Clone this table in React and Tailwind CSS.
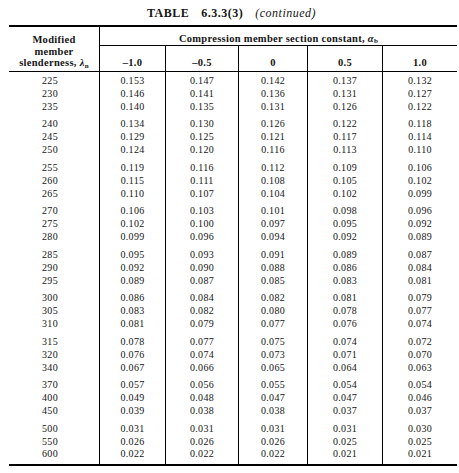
const rows = [
  [
    ["225", "0.153", "0.147", "0.142", "0.137", "0.132"],
    ["230", "0.146", "0.141", "0.136", "0.131", "0.127"],
    ["235", "0.140", "0.135", "0.131", "0.126", "0.122"],
  ],
  [
    ["240", "0.134", "0.130", "0.126", "0.122", "0.118"],
    ["245", "0.129", "0.125", "0.121", "0.117", "0.114"],
    ["250", "0.124", "0.120", "0.116", "0.113", "0.110"],
  ],
  [
    ["255", "0.119", "0.116", "0.112", "0.109", "0.106"],
    ["260", "0.115", "0.111", "0.108", "0.105", "0.102"],
    ["265", "0.110", "0.107", "0.104", "0.102", "0.099"],
  ],
  [
    ["270", "0.106", "0.103", "0.101", "0.098", "0.096"],
    ["275", "0.102", "0.100", "0.097", "0.095", "0.092"],
    ["280", "0.099", "0.096", "0.094", "0.092", "0.089"],
  ],
  [
    ["285", "0.095", "0.093", "0.091", "0.089", "0.087"],
    ["290", "0.092", "0.090", "0.088", "0.086", "0.084"],
    ["295", "0.089", "0.087", "0.085", "0.083", "0.081"],
  ],
  [
    ["300", "0.086", "0.084", "0.082", "0.081", "0.079"],
    ["305", "0.083", "0.082", "0.080", "0.078", "0.077"],
    ["310", "0.081", "0.079", "0.077", "0.076", "0.074"],
  ],
  [
    ["315", "0.078", "0.077", "0.075", "0.074", "0.072"],
    ["320", "0.076", "0.074", "0.073", "0.071", "0.070"],
    ["340", "0.067", "0.066", "0.065", "0.064", "0.063"],
  ],
  [
    ["370", "0.057", "0.056", "0.055", "0.054", "0.054"],
    ["400", "0.049", "0.048", "0.047", "0.047", "0.046"],
    ["450", "0.039", "0.038", "0.038", "0.037", "0.037"],
  ],
  [
    ["500", "0.031", "0.031", "0.031", "0.031", "0.030"],
    ["550", "0.026", "0.026", "0.026", "0.025", "0.025"],
    ["600", "0.022", "0.022", "0.022", "0.021", "0.021"],
  ],
];

const subHeads = ["\u20131.0", "\u20130.5", "0", "0.5", "1.0"];
const cols = "grid grid-cols-[91px_66px_73px_69px_75px_74px]";

function Group({ group, first, last }) {
  const pad = first ? "pt-[3px]" : last ? "pt-[5.1px] pb-[2.5px]" : "pt-[5.1px]";
  return (
    <div className={cols}>
      {[0, 1, 2, 3, 4, 5].map((c) => (
        <div
          key={c}
          className={`${pad} flex flex-col items-center ${c < 5 ? "border-r border-black" : ""} ${c === 0 ? "pr-[8px]" : ""}`}
        >
          {group.map((r, i) => (
            <span key={i} className="leading-[12.8px]">
              {r[c]}
            </span>
          ))}
        </div>
      ))}
    </div>
  );
}

export default function App() {
  return (
    <div
      className="w-[459px] h-[473px] bg-white text-[#151515]"
      style={{ fontFamily: '"Liberation Serif", "Times New Roman", serif' }}
    >
      {/* Title */}
      <div className="h-[25px] flex items-center justify-center gap-[12px] pl-[4px] pt-[1px] text-[12px] tracking-[0.5px]">
        <span className="font-bold">TABLE</span>
        <span className="font-bold">6.3.3(3)</span>
        <span className="italic">(continued)</span>
      </div>

      <div className="ml-[9px] w-[448px] border-t-2 border-b-2 border-black">
        {/* Header */}
        <div className={`${cols} border-b border-black font-bold text-[10.5px] tracking-[0.3px]`}>
          <div className="row-span-2 border-r border-black flex flex-col items-center justify-end pb-[2px] leading-[11.7px]">
            <span>Modified</span>
            <span>member</span>
            <span>
              slenderness, <i>&lambda;</i>
              <sub className="text-[7px] align-baseline relative top-[2px]">n</sub>
            </span>
          </div>
          <div className="col-span-5 h-[19px] border-b border-black flex items-end justify-center leading-[12px]">
            <span>
              Compression member section constant, <i>&alpha;</i>
              <sub className="text-[7px] align-baseline relative top-[1px]">b</sub>
            </span>
          </div>
          {subHeads.map((h, i) => (
            <div
              key={h}
              className={`h-[25px] flex items-end justify-center pb-[2px] leading-[12px] ${i < 4 ? "border-r border-black" : ""}`}
            >
              {h}
            </div>
          ))}
        </div>

        {/* Body */}
        <div className="text-[10px] tracking-[0.3px]">
          {rows.map((g, i) => (
            <Group key={i} group={g} first={i === 0} last={i === rows.length - 1} />
          ))}
        </div>
      </div>
    </div>
  );
}
